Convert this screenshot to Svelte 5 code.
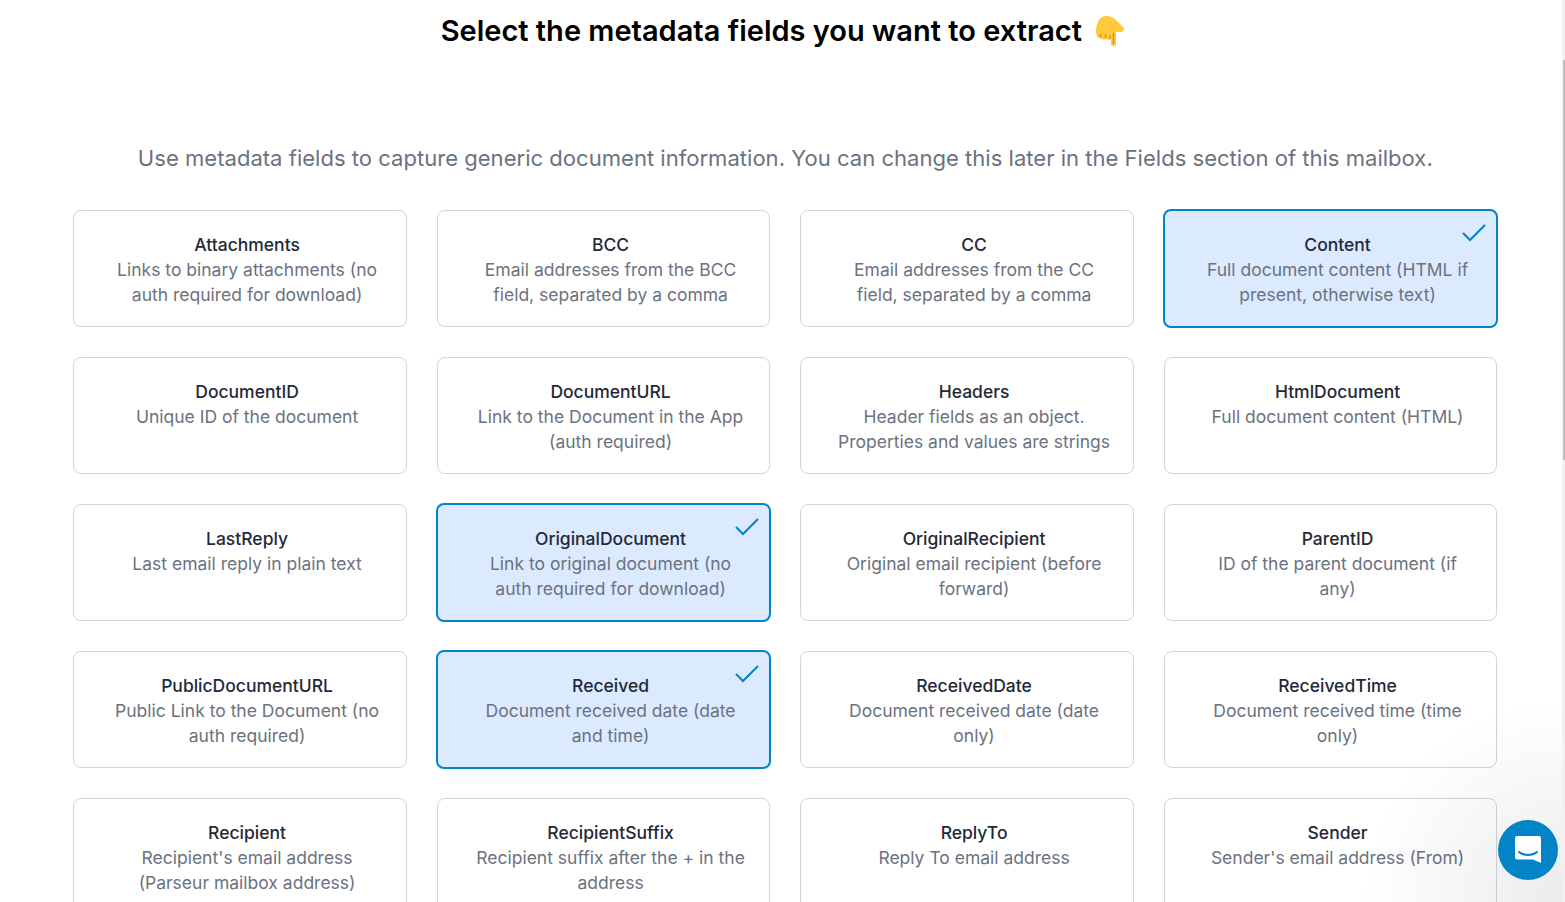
<script lang="ts">
  const fields = [
    { name: 'Attachments', desc: 'Links to binary attachments (no auth required for download)' },
    { name: 'BCC', desc: 'Email addresses from the BCC field, separated by a comma' },
    { name: 'CC', desc: 'Email addresses from the CC field, separated by a comma' },
    { name: 'Content', desc: 'Full document content (HTML if present, otherwise text)', selected: true },
    { name: 'DocumentID', desc: 'Unique ID of the document' },
    { name: 'DocumentURL', desc: 'Link to the Document in the App (auth required)' },
    { name: 'Headers', desc: 'Header fields as an object. Properties and values are strings' },
    { name: 'HtmlDocument', desc: 'Full document content (HTML)' },
    { name: 'LastReply', desc: 'Last email reply in plain text' },
    { name: 'OriginalDocument', desc: 'Link to original document (no auth required for download)', selected: true },
    { name: 'OriginalRecipient', desc: 'Original email recipient (before forward)' },
    { name: 'ParentID', desc: 'ID of the parent document (if any)' },
    { name: 'PublicDocumentURL', desc: 'Public Link to the Document (no auth required)' },
    { name: 'Received', desc: 'Document received date (date and time)', selected: true },
    { name: 'ReceivedDate', desc: 'Document received date (date only)' },
    { name: 'ReceivedTime', desc: 'Document received time (time only)' },
    { name: 'Recipient', desc: "Recipient's email address (Parseur mailbox address)" },
    { name: 'RecipientSuffix', desc: 'Recipient suffix after the + in the address' },
    { name: 'ReplyTo', desc: 'Reply To email address' },
    { name: 'Sender', desc: "Sender's email address (From)" }
  ]
</script>

<div class="page">
  <h1>
    <span>Select the metadata fields you want to extract</span>
    <svg class="hand" viewBox="0 0 28 31" width="28" height="31" aria-hidden="true">
      <path d="M10 0C14 0 17 1 20 4L27 11C29 13 28 16 25 16L20 16L20 28C20 31 15 31 15 28L15 23C13 24 11 24 10 23C8 24 6 23.500 5 22.500C3 22.500 1 21.500 0.500 19C-0.500 15 0 11 1.500 7C3 3 6 0 10 0Z" fill="#ffc83d" />
      <path d="M17.500 17V28M14 19V23M9.500 18V22M4.500 18V21" stroke="#e08a00" stroke-width="1.300" fill="none" />
    </svg>
  </h1>

  <p class="intro">Use metadata fields to capture generic document information. You can change this later in the Fields section of this mailbox.</p>

  <div class="grid">
    {#each fields as f}
      <div class="card" class:selected={f.selected}>
        {#if f.selected}
          <svg class="check" viewBox="0 0 24 24" width="24" height="24" aria-hidden="true">
            <path d="M1 11l7 7L23 3" fill="none" stroke="#0284c7" stroke-width="2" />
          </svg>
        {/if}
        <div class="name">{f.name}</div>
        <div class="desc">{f.desc}</div>
      </div>
    {/each}
  </div>
</div>

<div class="chat-glow"></div>
<button type="button" class="chat" aria-label="Chat">
  <svg viewBox="0 0 28 32" width="28" height="32" aria-hidden="true">
    <path d="M3 2h22a2 2 0 0 1 2 2v25l-8-3.500H3a2 2 0 0 1-2-2V4a2 2 0 0 1 2-2z" fill="#fff" />
    <path d="M5 18c5 4 13 4 18 0" fill="none" stroke="#0284c7" stroke-width="2" stroke-linecap="round" />
  </svg>
</button>
<div class="scrollbar"><div class="thumb"></div></div>

<style>
  :global(body) {
    margin: 0;
    background: #fff;
    overflow: hidden;
    font-family: Inter, "Liberation Sans", sans-serif;
  }
  .page {
    height: 902px;
    overflow: hidden;
    padding: 0 67.700px 0 73.300px;
    box-sizing: border-box;
  }
  h1 {
    display: flex;
    justify-content: center;
    align-items: center;
    gap: 14px;
    margin: 12px 0 0;
    padding-right: 6px;
    height: 38px;
    font-size: 29px;
    font-weight: 600;
    line-height: 38px;
    color: #000;
  }
  .intro {
    margin: 89px 0 0;
    font-size: 22.070px;
    line-height: 38px;
    color: #6b7280;
    text-align: center;
    white-space: nowrap;
  }
  .grid {
    display: grid;
    grid-template-columns: repeat(4, 1fr);
    grid-auto-rows: 117px;
    gap: 30px;
    margin-top: 33px;
  }
  .card {
    position: relative;
    box-sizing: border-box;
    border: 1px solid #d1d5db;
    border-radius: 8px;
    padding: 20.500px 22px 0 36px;
    text-align: center;
    font-size: 17.500px;
    line-height: 25px;
    background: #fff;
  }
  .card.selected {
    border: 2px solid #0284c7;
    background: #dbeafe;
    margin: -1px;
  }
  .name {
    color: #1f2937;
    font-weight: 500;
  }
  .desc {
    color: #6b7280;
    font-weight: 400;
  }
  .check {
    position: absolute;
    top: 11px;
    right: 10px;
  }
  .chat-glow {
    position: fixed;
    right: 0;
    bottom: 0;
    width: 200px;
    height: 200px;
    background: radial-gradient(ellipse at bottom right, rgba(29, 39, 50, 0.09) 0, rgba(29, 39, 50, 0) 72%);
    pointer-events: none;
  }
  .chat {
    position: fixed;
    right: 7px;
    bottom: 22px;
    width: 60px;
    height: 60px;
    padding: 0;
    border: 0;
    border-radius: 50%;
    background: #0284c7;
    display: flex;
    align-items: center;
    justify-content: center;
  }
  .scrollbar {
    position: fixed;
    top: 0;
    right: 0;
    width: 3px;
    height: 100%;
    background: #f1f1f1;
  }
  .thumb {
    position: absolute;
    top: 60px;
    right: 0;
    width: 2px;
    height: 400px;
    background: #c1c1c1;
  }
</style>
